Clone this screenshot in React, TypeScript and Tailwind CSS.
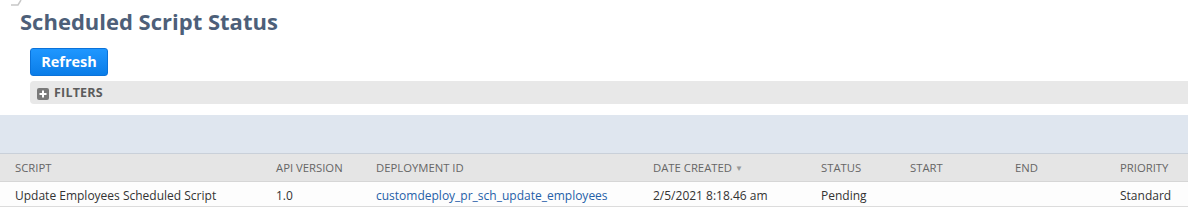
const COLS = 'grid grid-cols-[261px_100px_277px_168px_89px_105px_105px_83px]';

const HEADERS = ['Script', 'API Version', 'Deployment ID', 'Date Created', 'Status', 'Start', 'End', 'Priority'];

export default function App() {
  return (
    <div className="relative w-[1188px] h-[209px] overflow-hidden bg-white font-['Open_Sans',sans-serif]">
      {/* stray arrow corner from the cropped screenshot */}
      <svg className="absolute left-[10px] top-0" width="12" height="6" viewBox="0 0 12 6">
        <path d="M1 5 L8 5 L11 0" stroke="#c8c8c8" strokeWidth="1.5" fill="none" />
      </svg>

      <h1 className="pl-5 pt-[5px] h-[48px] text-[22px] leading-[32px] font-bold text-[#4d5f79]">
        Scheduled Script Status
      </h1>

      <div className="pl-[30px]">
        <button className="h-[28px] w-[78px] rounded-[3px] border border-[#0b72d9] bg-gradient-to-b from-[#1f97ff] to-[#0a7de8] pt-[1px] text-[14.5px] font-bold text-white leading-none">
          Refresh
        </button>
      </div>

      <div className="ml-[30px] mt-[5px] h-[23px] flex items-center gap-[5px] rounded-l-[4px] bg-[#e8e8e8] pl-[7px] pt-[2px]">
        <span className="flex h-[12px] w-[12px] items-center justify-center rounded-[2px] bg-[#7a7a7a]">
          <svg width="8" height="8" viewBox="0 0 8 8">
            <path d="M4 0.5 V7.5 M0.5 4 H7.5" stroke="#fff" strokeWidth="2" />
          </svg>
        </span>
        <span className="text-[12.5px] font-bold text-[#5c5c5c] tracking-[0.2px]">FILTERS</span>
      </div>

      <div className="mt-[11px] h-[39px] bg-[#dfe6ef] border-b border-[#c9d0d9]" />

      <div className={`${COLS} h-[28px] items-center bg-[#e5e5e5] border-b border-[#d6d6d6] pt-[1px] text-[11.3px] text-[#666] uppercase`}>
        {HEADERS.map((h) => (
          <div key={h} className="pl-[15px] flex items-center gap-[3px]">
            {h}
            {h === 'Date Created' && <span className="text-[8px] text-[#999]">▼</span>}
          </div>
        ))}
      </div>

      <div className={`${COLS} h-[25px] items-center bg-[#fdfdfd] border-b border-[#dcdcdc] pt-[4px] text-[12px] text-[#333]`}>
        <div className="pl-[15px]">Update Employees Scheduled Script</div>
        <div className="pl-[15px]">1.0</div>
        <div className="pl-[15px]">
          <a className="text-[#255fa8]" href="#">customdeploy_pr_sch_update_employees</a>
        </div>
        <div className="pl-[15px]">2/5/2021 8:18.46 am</div>
        <div className="pl-[15px]">Pending</div>
        <div className="pl-[15px]" />
        <div className="pl-[15px]" />
        <div className="pl-[15px]">Standard</div>
      </div>
    </div>
  );
}
